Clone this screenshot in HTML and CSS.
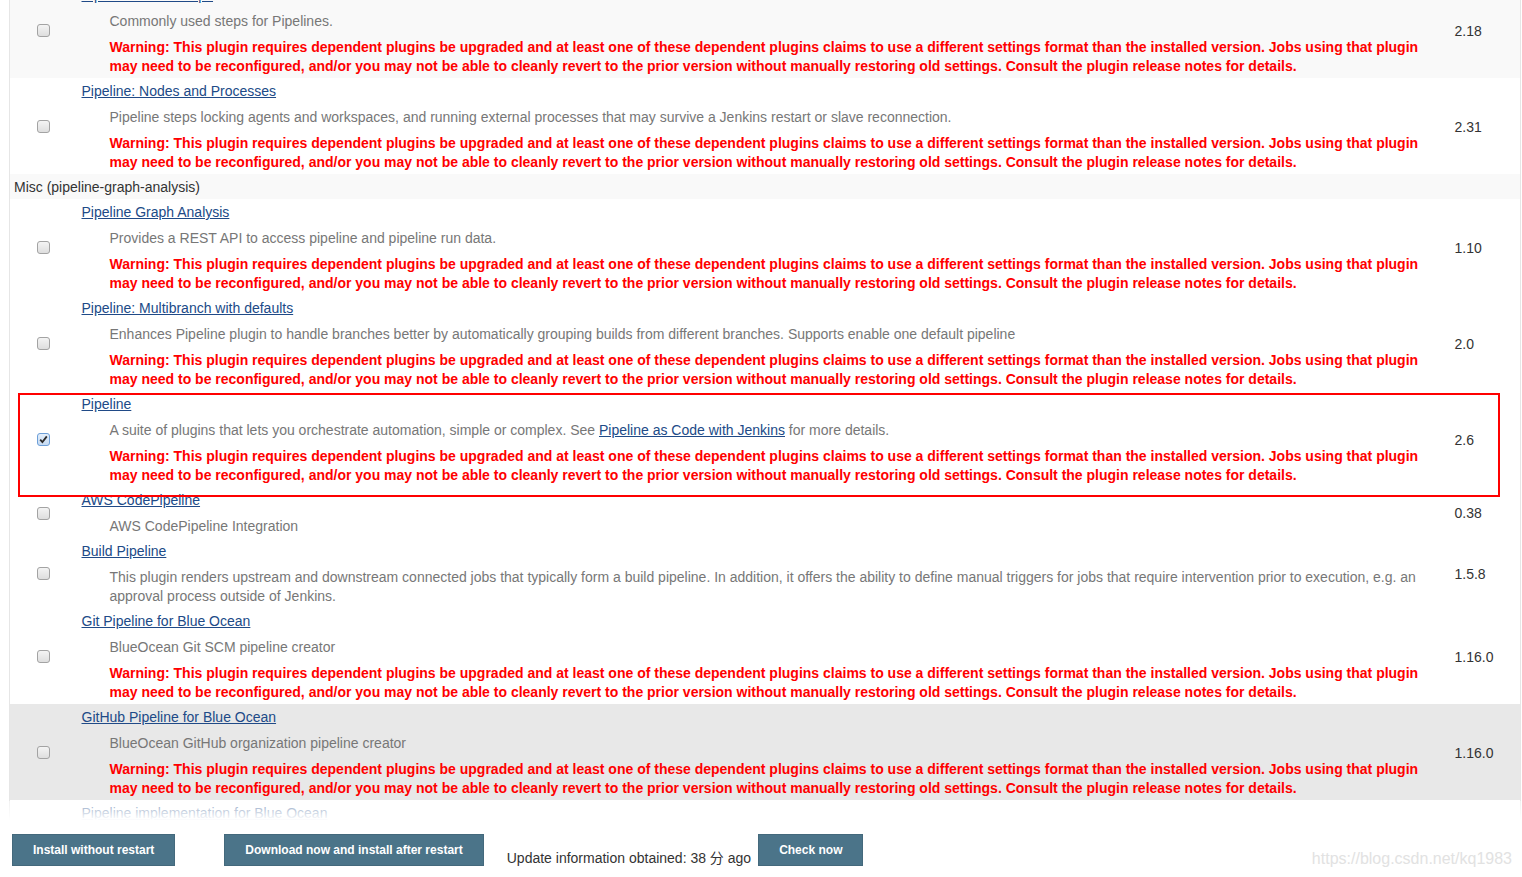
FILE: index.html
```html
<!DOCTYPE html>
<html lang="en">
<head>
    <meta charset="UTF-8">
    <title>Plugin Manager - Available</title>
    <link rel="stylesheet" href="styles.css">
</head>
<body>
    <div class="pane">
        <table class="plugins">
            <colgroup>
                <col class="col-check">
                <col>
                <col class="col-version">
            </colgroup>
            <tbody>
                <tr class="plugin odd">
                    <td class="check"><span class="cb"></span></td>
                    <td class="details">
                        <a href="#">Pipeline: Basic Steps</a>
                        <div class="excerpt">Commonly used steps for Pipelines.</div>
                        <div class="warning">Warning: This plugin requires dependent plugins be upgraded and at least one of these dependent plugins claims to use a different settings format than the installed version. Jobs using that plugin may need to be reconfigured, and/or you may not be able to cleanly revert to the prior version without manually restoring old settings. Consult the plugin release notes for details.</div>
                    </td>
                    <td class="version">2.18</td>
                </tr>
                <tr class="plugin">
                    <td class="check"><span class="cb"></span></td>
                    <td class="details">
                        <a href="#">Pipeline: Nodes and Processes</a>
                        <div class="excerpt">Pipeline steps locking agents and workspaces, and running external processes that may survive a Jenkins restart or slave reconnection.</div>
                        <div class="warning">Warning: This plugin requires dependent plugins be upgraded and at least one of these dependent plugins claims to use a different settings format than the installed version. Jobs using that plugin may need to be reconfigured, and/or you may not be able to cleanly revert to the prior version without manually restoring old settings. Consult the plugin release notes for details.</div>
                    </td>
                    <td class="version">2.31</td>
                </tr>
                <tr class="category">
                    <td colspan="3">Misc (pipeline-graph-analysis)</td>
                </tr>
                <tr class="plugin">
                    <td class="check"><span class="cb"></span></td>
                    <td class="details">
                        <a href="#">Pipeline Graph Analysis</a>
                        <div class="excerpt">Provides a REST API to access pipeline and pipeline run data.</div>
                        <div class="warning">Warning: This plugin requires dependent plugins be upgraded and at least one of these dependent plugins claims to use a different settings format than the installed version. Jobs using that plugin may need to be reconfigured, and/or you may not be able to cleanly revert to the prior version without manually restoring old settings. Consult the plugin release notes for details.</div>
                    </td>
                    <td class="version">1.10</td>
                </tr>
                <tr class="plugin">
                    <td class="check"><span class="cb"></span></td>
                    <td class="details">
                        <a href="#">Pipeline: Multibranch with defaults</a>
                        <div class="excerpt">Enhances Pipeline plugin to handle branches better by automatically grouping builds from different branches. Supports enable one default pipeline</div>
                        <div class="warning">Warning: This plugin requires dependent plugins be upgraded and at least one of these dependent plugins claims to use a different settings format than the installed version. Jobs using that plugin may need to be reconfigured, and/or you may not be able to cleanly revert to the prior version without manually restoring old settings. Consult the plugin release notes for details.</div>
                    </td>
                    <td class="version">2.0</td>
                </tr>
                <tr class="plugin">
                    <td class="check">
                        <span class="cb checked">
                            <svg width="9" height="9" viewBox="0 0 9 9"><path d="M1.2 4.6 L3.4 7 L7.8 1.4" fill="none" stroke="#2b2b2b" stroke-width="1.8"/></svg>
                        </span>
                    </td>
                    <td class="details">
                        <a href="#">Pipeline</a>
                        <div class="excerpt">A suite of plugins that lets you orchestrate automation, simple or complex. See <a href="#">Pipeline as Code with Jenkins</a> for more details.</div>
                        <div class="warning">Warning: This plugin requires dependent plugins be upgraded and at least one of these dependent plugins claims to use a different settings format than the installed version. Jobs using that plugin may need to be reconfigured, and/or you may not be able to cleanly revert to the prior version without manually restoring old settings. Consult the plugin release notes for details.</div>
                    </td>
                    <td class="version">2.6</td>
                </tr>
                <tr class="plugin">
                    <td class="check"><span class="cb"></span></td>
                    <td class="details">
                        <a href="#">AWS CodePipeline</a>
                        <div class="excerpt">AWS CodePipeline Integration</div>
                    </td>
                    <td class="version">0.38</td>
                </tr>
                <tr class="plugin">
                    <td class="check"><span class="cb"></span></td>
                    <td class="details">
                        <a href="#">Build Pipeline</a>
                        <div class="excerpt">This plugin renders upstream and downstream connected jobs that typically form a build pipeline. In addition, it offers the ability to define manual triggers for jobs that require intervention prior to execution, e.g. an approval process outside of Jenkins.</div>
                    </td>
                    <td class="version">1.5.8</td>
                </tr>
                <tr class="plugin">
                    <td class="check"><span class="cb"></span></td>
                    <td class="details">
                        <a href="#">Git Pipeline for Blue Ocean</a>
                        <div class="excerpt">BlueOcean Git SCM pipeline creator</div>
                        <div class="warning">Warning: This plugin requires dependent plugins be upgraded and at least one of these dependent plugins claims to use a different settings format than the installed version. Jobs using that plugin may need to be reconfigured, and/or you may not be able to cleanly revert to the prior version without manually restoring old settings. Consult the plugin release notes for details.</div>
                    </td>
                    <td class="version">1.16.0</td>
                </tr>
                <tr class="plugin hover">
                    <td class="check"><span class="cb"></span></td>
                    <td class="details">
                        <a href="#">GitHub Pipeline for Blue Ocean</a>
                        <div class="excerpt">BlueOcean GitHub organization pipeline creator</div>
                        <div class="warning">Warning: This plugin requires dependent plugins be upgraded and at least one of these dependent plugins claims to use a different settings format than the installed version. Jobs using that plugin may need to be reconfigured, and/or you may not be able to cleanly revert to the prior version without manually restoring old settings. Consult the plugin release notes for details.</div>
                    </td>
                    <td class="version">1.16.0</td>
                </tr>
                <tr class="plugin">
                    <td class="check"><span class="cb"></span></td>
                    <td class="details">
                        <a href="#">Pipeline implementation for Blue Ocean</a>
                        <div class="excerpt">BlueOcean Pipeline API implementation</div>
                    </td>
                    <td class="version">1.16.0</td>
                </tr>
            </tbody>
        </table>

        <!-- annotation box drawn over the selected row -->
        <div class="highlight"></div>
    </div>

    <div class="bottom-sticker">
        <button class="btn">Install without restart</button>
        <button class="btn btn-wide">Download now and install after restart</button>
        <span class="update-info">Update information obtained: 38 分 ago</span>
        <button class="btn">Check now</button>
        <span class="watermark">https://blog.csdn.net/kq1983</span>
    </div>
</body>
</html>
```

FILE: styles.css
```css
body {
    margin: 0;
    background: #fff;
    color: #333;
    font-family: "Liberation Sans", Arial, "Noto Sans CJK SC", sans-serif;
    font-size: 14px;
    line-height: 19px;
    overflow: hidden;
}

a {
    color: #204a87;
    text-decoration: underline;
}

/* Plugin list, scrolled a little so the first row is cut off */
.pane {
    position: relative;
    height: 825px;
    overflow: hidden;
}

.pane::after {
    content: "";
    position: absolute;
    left: 0;
    right: 0;
    bottom: 0;
    height: 24px;
    background: linear-gradient(rgba(255, 255, 255, 0.45), #fff 80%);
}

.plugins {
    margin: -18px 0 0 9px;
    width: 1512px;
    table-layout: fixed;
    border-collapse: collapse;
    border-left: 1px solid #e6e6e6;
    border-right: 1px solid #e6e6e6;
}

.col-check {
    width: 68px;
}

.col-version {
    width: 70px;
}

.plugins td {
    padding: 4px 4px 2px;
    vertical-align: middle;
}

.plugin.odd,
.category {
    background: #f9f9f9;
}

.plugin.hover {
    background: #e8e8e8;
}

.check {
    text-align: center;
}

.cb {
    display: inline-block;
    box-sizing: border-box;
    width: 13px;
    height: 13px;
    border: 1px solid #a3a3a3;
    border-radius: 3px;
    background: linear-gradient(#f4f4f4, #dedede);
    vertical-align: middle;
    position: relative;
    top: -1px;
}

.cb.checked {
    border-color: #6d9fd8;
    background: linear-gradient(#e4effb, #c5daf2);
}

.cb svg {
    display: block;
    margin: 1px 0 0 1px;
}

.excerpt {
    margin: 7px 0 0 28px;
    color: #777;
}

.warning {
    margin: 7px 0 0 28px;
    color: #ff0000;
    font-weight: bold;
}

.version {
    color: #333;
}

/* red annotation drawn over the screenshot */
.highlight {
    position: absolute;
    left: 18px;
    top: 393px;
    width: 1478px;
    height: 100px;
    border: 2px solid #f00;
}

/* Buttons bar */
.bottom-sticker {
    display: flex;
    align-items: flex-start;
    height: 52px;
    box-sizing: border-box;
    padding: 9px 0 0 12px;
    position: relative;
}

.btn {
    height: 32px;
    padding: 0 20px;
    border: 1px solid #44697c;
    background: #4b7489;
    color: #fff;
    font-family: "Liberation Sans", Arial, sans-serif;
    font-size: 12px;
    font-weight: bold;
    cursor: pointer;
}

.btn-wide {
    margin-left: 49px;
}

.update-info {
    margin: 15px 7px 0 23px;
    color: #333;
}

.watermark {
    position: absolute;
    right: 10px;
    top: 24px;
    font-size: 16px;
    color: #e2e2e2;
}
```
